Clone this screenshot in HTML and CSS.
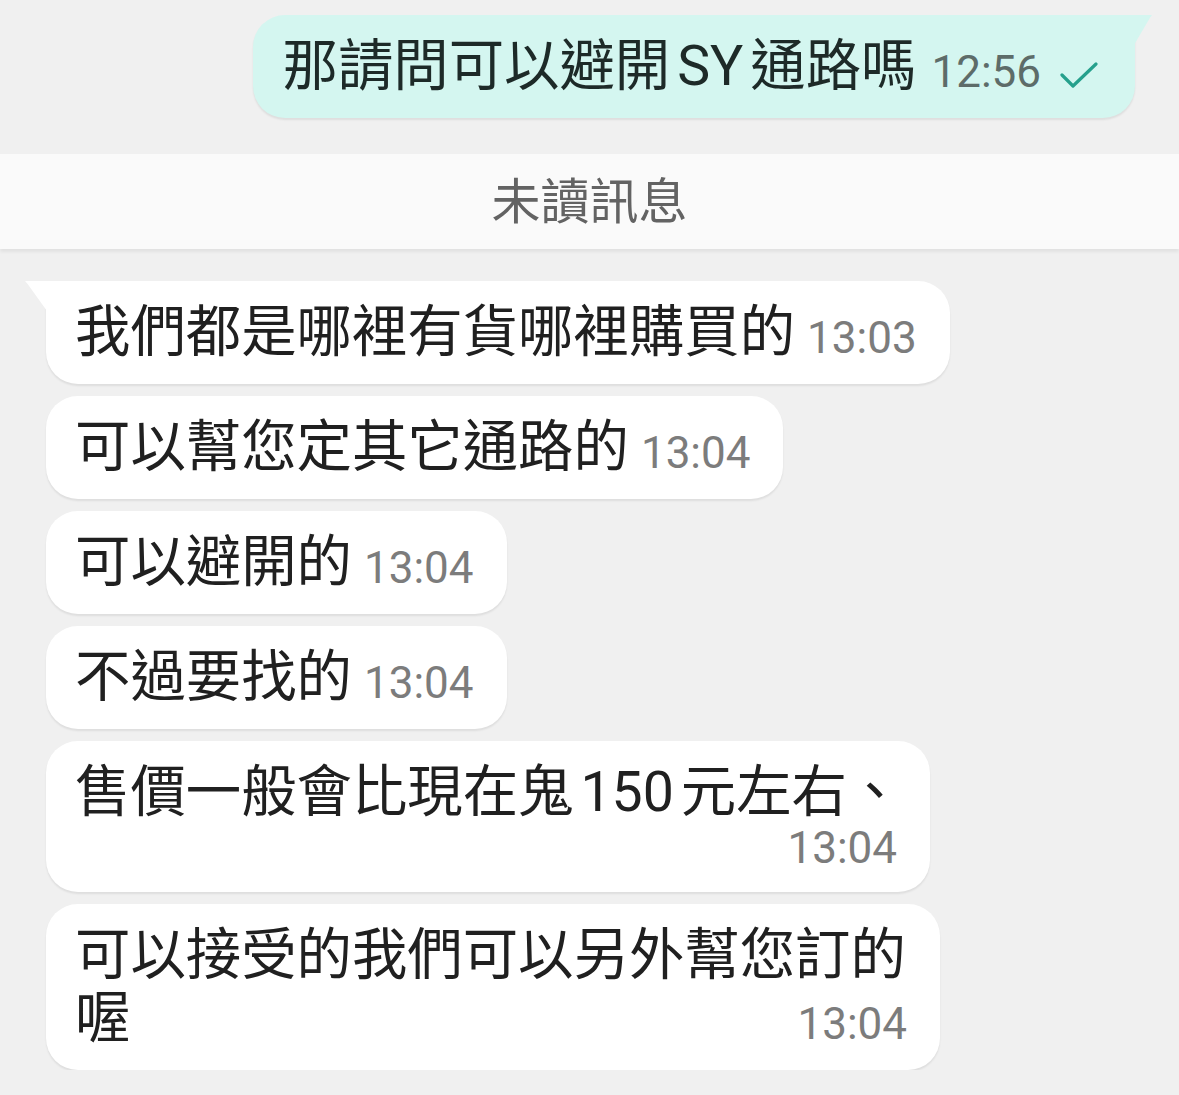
FILE: index.html
```html
<!DOCTYPE html>
<html lang="zh-Hant">

<head>
    <meta charset="UTF-8">
    <meta name="viewport" content="width=device-width, initial-scale=1.0">
    <title>聊天</title>
    <link rel="stylesheet" href="styles.css">
</head>

<body>

    <div class="chat">
        <div class="row-out">
            <div class="bubble bubble-out">那請問可以避開SY通路嗎<span class="meta"><span class="time-out">12:56</span><svg class="check" width="38" height="28" viewBox="0 0 38 28"><path d="M2 14 L13 25 L36 3" fill="none" stroke="#25a08c" stroke-width="3.2" stroke-linecap="round" stroke-linejoin="round"/></svg></span></div>
        </div>

        <div class="unread">未讀訊息</div>

        <div class="thread">
            <div class="bubble bubble-in first">我們都是哪裡有貨哪裡購買的<span class="time">13:03</span></div>
            <div class="bubble bubble-in">可以幫您定其它通路的<span class="time">13:04</span></div>
            <div class="bubble bubble-in">可以避開的<span class="time">13:04</span></div>
            <div class="bubble bubble-in">不過要找的<span class="time">13:04</span></div>
            <div class="bubble bubble-in narrow">售價一般會比現在鬼150元左右、<span class="time below">13:04</span></div>
            <div class="bubble bubble-in medium">可以接受的我們可以另外幫您訂的喔<span class="time">13:04</span></div>
        </div>
    </div>

</body>

</html>
```

FILE: styles.css
```css
body {
    margin: 0;
    background-color: #f0f0f0;
    font-family: Roboto, "Noto Sans CJK TC", sans-serif;
    color: #202020;
}

.chat {
    padding-top: 15px;
}

.row-out {
    display: flex;
    justify-content: flex-end;
    padding-right: 44px;
}

.bubble {
    position: relative;
    display: flow-root;
    width: fit-content;
    max-width: 920px;
    box-sizing: border-box;
    padding: 20px 33px 20px 29px;
    font-size: 55.4px;
    line-height: 63px;
    border-radius: 32px;
    background-color: #fff;
    box-shadow: 0 2px 2px rgba(0, 0, 0, 0.08);
    text-autospace: normal;
}

.bubble-out {
    background-color: #d4f6f0;
    border-top-right-radius: 0;
    color: #1d2a28;
    padding-right: 37px;
    padding-left: 30px;
}

.bubble-out::after {
    content: "";
    position: absolute;
    top: 0;
    right: -17px;
    width: 18px;
    height: 30px;
    background-color: #d4f6f0;
    clip-path: polygon(0 0, 100% 0, 88% 10%, 0 100%);
}

.bubble-in.first {
    border-top-left-radius: 0;
}

.bubble-in.first::before {
    content: "";
    position: absolute;
    top: 0;
    left: -21px;
    width: 22px;
    height: 30px;
    background-color: #fff;
    clip-path: polygon(0 0, 100% 0, 100% 100%, 12% 10%);
}

.meta {
    float: right;
    display: flex;
    align-items: center;
    margin-left: 15px;
    margin-top: 11px;
    line-height: 52px;
}

.time-out {
    font-size: 44px;
    color: #5d6c69;
}

.check {
    margin-left: 19px;
    margin-top: 6px;
}

.time {
    float: right;
    margin-left: 12px;
    margin-top: 11px;
    font-size: 44px;
    line-height: 52px;
    color: #7c7c7c;
}

.time.below {
    margin-top: 0;
    margin-right: 9px;
    line-height: 48px;
}

.narrow {
    max-width: 884px;
    padding-right: 24px;
}

.medium {
    max-width: 894px;
}

.unread {
    margin-top: 36px;
    height: 95px;
    padding-top: 3px;
    box-sizing: border-box;
    line-height: 92px;
    text-align: center;
    font-size: 49px;
    color: #636363;
    background-color: #fafafa;
    box-shadow: 0 3px 3px rgba(0, 0, 0, 0.06);
}

.thread {
    display: flex;
    flex-direction: column;
    align-items: flex-start;
    gap: 12px;
    padding: 32px 0 0 46px;
}
```
